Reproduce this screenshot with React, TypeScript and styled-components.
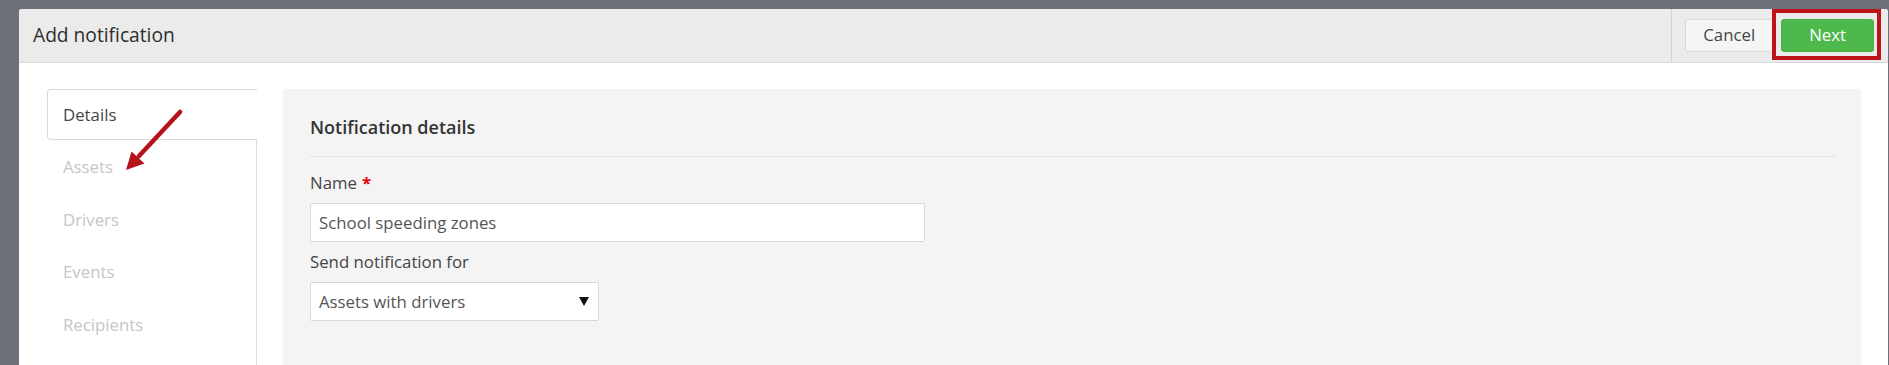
import React from 'react';
import styled, { createGlobalStyle, css } from 'styled-components';

const GlobalStyle = createGlobalStyle`
  html, body {
    margin: 0;
    padding: 0;
    height: 365px;
    overflow: hidden;
    background: #6b7079;
    font-family: "Open Sans", "DejaVu Sans", sans-serif;
  }
  * { box-sizing: border-box; }
`;

const Page = styled.div`
  height: 365px;
  padding: 9px 1px 0 19px;
`;

const Modal = styled.div`
  height: 100%;
  background: #ffffff;
  border-radius: 3px 3px 0 0;
  display: flex;
  flex-direction: column;
  overflow: hidden;
`;

const Header = styled.div`
  height: 54px;
  flex-shrink: 0;
  display: flex;
  align-items: stretch;
  background: #ebebeb;
  border-bottom: 1px solid #dcdcdc;
`;

const Title = styled.h1`
  flex: 1;
  margin: 0;
  padding: 0 0 3px 14px;
  display: flex;
  align-items: center;
  font-size: 19.2px;
  font-weight: 400;
  color: #2e2e2e;
`;

const Actions = styled.div`
  display: flex;
  align-items: center;
  gap: 8px;
  padding: 0 14px 0 13px;
  border-left: 1px solid #d2d2d2;
`;

const Button = styled.button<{ $primary?: boolean }>`
  height: 33px;
  border-radius: 3px;
  font-family: inherit;
  font-size: 16.8px;
  line-height: 1;
  cursor: pointer;
  ${({ $primary }) =>
    $primary
      ? css`
          padding: 0 27px;
          background: #4db84b;
          border: 1px solid #47ad45;
          color: #ffffff;
        `
      : css`
          padding: 0 17px;
          background: #f5f5f5;
          border: 1px solid #dadada;
          color: #444;
        `}
`;

const Highlight = styled.div`
  position: relative;
  display: flex;

  &::after {
    content: '';
    position: absolute;
    top: -10px;
    bottom: -8px;
    left: -9px;
    right: -7px;
    border: 4px solid #bd1319;
    pointer-events: none;
  }
`;

const Body = styled.div`
  position: relative;
  flex: 1;
  display: flex;
  gap: 26px;
  padding: 26px 27px 0 28px;
`;

const Sidebar = styled.nav`
  width: 210px;
  flex-shrink: 0;
  display: flex;
  flex-direction: column;
  gap: 2px;
  border-right: 1px solid #dddddd;
`;

const NavItem = styled.div<{ $active?: boolean }>`
  position: relative;
  z-index: 1;
  height: 50.5px;
  flex-shrink: 0;
  margin-right: -1px;
  display: flex;
  align-items: center;
  padding-left: 15px;
  font-size: 16.8px;
  border: 1px solid transparent;
  border-right: 0;
  border-radius: 4px 0 0 4px;
  color: ${({ $active }) => ($active ? '#444' : '#c6c6c6')};
  ${({ $active }) =>
    $active &&
    css`
      background: #ffffff;
      border-color: #d9d9d9;
    `}
`;

const Panel = styled.section`
  flex: 1;
  min-height: 400px;
  background: #f4f4f4;
  border-radius: 3px;
  padding: 25px 26px 0 27px;
`;

const PanelTitle = styled.h2`
  margin: 0 0 13px;
  padding-bottom: 15px;
  border-bottom: 1px solid #e2e2e2;
  font-size: 18px;
  line-height: 27px;
  font-weight: 600;
  color: #333;
`;

const Label = styled.div`
  font-size: 16.8px;
  line-height: 25px;
  color: #444;
  margin-bottom: 8px;
`;

const Required = styled.span`
  color: #e60000;
  font-weight: 700;
  margin-left: 5px;
`;

const fieldBase = css`
  height: 39px;
  background: #ffffff;
  border: 1px solid #d8d8d8;
  border-radius: 2px;
  font-family: inherit;
  font-size: 16.8px;
  color: #555;
`;

const TextInput = styled.input`
  ${fieldBase};
  display: block;
  width: 615px;
  padding: 0 8px;
  margin-bottom: 7px;
  outline: none;
`;

const SelectBox = styled.div`
  ${fieldBase};
  width: 289px;
  display: flex;
  align-items: center;
  justify-content: space-between;
  padding: 0 9px 0 8px;
`;

const Caret = styled.span`
  width: 0;
  height: 0;
  border-left: 5.5px solid transparent;
  border-right: 5.5px solid transparent;
  border-top: 9px solid #111;
`;

const Pointer = styled.svg`
  position: absolute;
  left: 0;
  top: 0;
  pointer-events: none;
  z-index: 2;
`;

const tabs = ['Details', 'Assets', 'Drivers', 'Events', 'Recipients'];

const App: React.FC = () => {
  return (
    <Page>
      <GlobalStyle />
      <Modal>
        <Header>
          <Title>Add notification</Title>
          <Actions>
            <Button>Cancel</Button>
            <Highlight>
              <Button $primary>Next</Button>
            </Highlight>
          </Actions>
        </Header>

        <Body>
          <Sidebar>
            {tabs.map((t, i) => (
              <NavItem key={t} $active={i === 0}>
                {t}
              </NavItem>
            ))}
          </Sidebar>

          <Panel>
            <PanelTitle>Notification details</PanelTitle>
            <Label>
              Name<Required>*</Required>
            </Label>
            <TextInput defaultValue="School speeding zones" />
            <Label>Send notification for</Label>
            <SelectBox>
              <span>Assets with drivers</span>
              <Caret />
            </SelectBox>
          </Panel>

          {/* annotation arrow pointing at the Assets tab */}
          <Pointer width="200" height="140" viewBox="0 0 200 140">
            <line x1="161" y1="49" x2="120" y2="93" stroke="#b5121b" strokeWidth="4.5" strokeLinecap="round" />
            <polygon points="107,107 112.5,88.5 125.5,100.5" fill="#b5121b" />
          </Pointer>
        </Body>
      </Modal>
    </Page>
  );
};

export default App;
